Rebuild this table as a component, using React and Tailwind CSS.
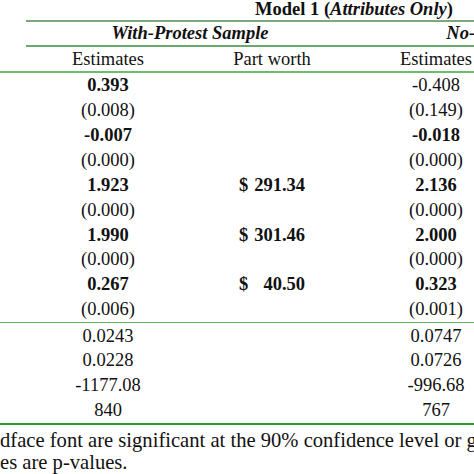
import React from "react";

const rows = [
  { a: "0.393", ab: true, p: "", c: "-0.408", cb: false },
  { a: "(0.008)", p: "", c: "(0.149)" },
  { a: "-0.007", ab: true, p: "", c: "-0.018", cb: true },
  { a: "(0.000)", p: "", c: "(0.000)" },
  { a: "1.923", ab: true, p: "291.34", c: "2.136", cb: true },
  { a: "(0.000)", p: "", c: "(0.000)" },
  { a: "1.990", ab: true, p: "301.46", c: "2.000", cb: true },
  { a: "(0.000)", p: "", c: "(0.000)" },
  { a: "0.267", ab: true, p: "40.50", c: "0.323", cb: true },
  { a: "(0.006)", p: "", c: "(0.001)" },
];

const stats = [
  ["0.0243", "0.0747"],
  ["0.0228", "0.0726"],
  ["-1177.08", "-996.68"],
  ["840", "767"],
];

function Row({ a, ab, p, c, cb }) {
  return (
    <div className="flex h-[24.9px] items-center">
      <div className="w-[26px] shrink-0" />
      <div className={`w-[164px] shrink-0 text-center ${ab ? "font-bold" : ""}`}>{a}</div>
      <div className="w-[164px] shrink-0 text-center font-bold">
        {p && (
          <span className="inline-flex w-[66px] justify-between">
            <span>$</span>
            <span>{p}</span>
          </span>
        )}
      </div>
      <div className={`w-[164px] shrink-0 text-center ${cb ? "font-bold" : ""}`}>{c}</div>
    </div>
  );
}

export default function App() {
  return (
    <div
      className="w-[474px] h-[474px] overflow-hidden bg-white text-[#111] text-[18.5px] leading-none"
      style={{ fontFamily: '"Liberation Serif", "Times New Roman", serif' }}
    >
      <div className="w-[700px]">
        {/* Model heading */}
        <div className="flex">
          <div className="w-[26px] shrink-0" />
          <div className="flex-1">
            <div className="h-[20px] flex items-center w-[656px] justify-center font-bold pb-[2px]">
              <span>
                Model 1 (<i>Attributes Only</i>)
              </span>
            </div>
            <div className="h-[2px] bg-[#7aa97c]" />
            <div className="h-[23px] flex items-center font-bold italic">
              <div className="w-[328px] text-center">With-Protest Sample</div>
              <div className="w-[328px] text-center">No-Protest Sample</div>
            </div>
            <div className="h-[2px] bg-[#6aa870]" />
          </div>
        </div>

        {/* Column labels */}
        <div className="flex h-[24px] items-center">
          <div className="w-[26px] shrink-0" />
          <div className="w-[164px] shrink-0 text-center">Estimates</div>
          <div className="w-[164px] shrink-0 text-center">Part worth</div>
          <div className="w-[164px] shrink-0 text-center">Estimates</div>
        </div>
        <div className="h-[2px] bg-[#6dbb6d]" />

        {/* Estimates */}
        <div>
          {rows.map((r, i) => (
            <Row key={i} {...r} />
          ))}
        </div>
        <div className="h-[1.5px] bg-[#63b463]" />

        {/* Fit statistics */}
        <div>
          {stats.map(([a, c], i) => (
            <Row key={i} a={a} p="" c={c} />
          ))}
        </div>
        <div className="h-[2.5px] bg-[#2a9a2a]" />
      </div>

      {/* Note */}
      <div className="text-[20.6px] leading-[21.5px] whitespace-nowrap pt-[5px]">
        <div>dface font are significant at the 90% confidence level or greater</div>
        <div>es are p-values.</div>
      </div>
    </div>
  );
}
